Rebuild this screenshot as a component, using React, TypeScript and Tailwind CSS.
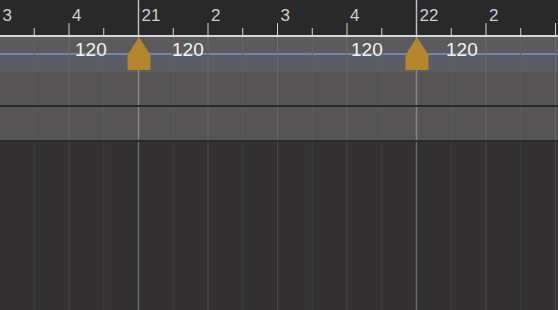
// Tempo ruler + track lanes, fixed zoom: one bar = 4 beats = 278px.
const ORIGIN = 138.5; // x of bar 21
const HALF = 34.75; // half-beat width
const STEPS = Array.from({ length: 17 }, (_, i) => i - 4); // -4 .. 12

const pos = (k: number) => ORIGIN + k * HALF;
const isBar = (k: number) => k % 8 === 0;
const isBeat = (k: number) => k % 2 === 0;

const RULER_LABELS: { k: number; text: string }[] = [
  { k: -4, text: "3" },
  { k: -2, text: "4" },
  { k: 0, text: "21" },
  { k: 2, text: "2" },
  { k: 4, text: "3" },
  { k: 6, text: "4" },
  { k: 8, text: "22" },
  { k: 10, text: "2" },
];

const TEMPO_LABELS = [75, 172, 351, 446];
const MARKERS = [0, 8];

type GridColors = { half: string; beat: string; bar: string };

function Grid({ colors }: { colors: GridColors }) {
  return (
    <svg className="pointer-events-none absolute inset-0 h-full w-full">
      {STEPS.map((k) => {
        const bar = isBar(k);
        const fill = bar ? colors.bar : isBeat(k) ? colors.beat : colors.half;
        return (
          <rect
            key={k}
            x={pos(k) - (bar ? 0.75 : 0.5)}
            y={0}
            width={bar ? 1.5 : 1}
            height="100%"
            fill={fill}
          />
        );
      })}
    </svg>
  );
}

function Ruler() {
  return (
    <div className="relative h-[37px] shrink-0 bg-[#2a292a]">
      <svg className="pointer-events-none absolute inset-0 h-full w-full">
        {STEPS.map((k) => {
          if (isBar(k))
            return <rect key={k} x={pos(k) - 0.75} y={0} width={1.5} height={37} fill="#bdbcbd" />;
          const top = isBeat(k) ? 23 : 28;
          return <rect key={k} x={pos(k) - 0.5} y={top} width={1} height={35 - top} fill="#d6d5d6" />;
        })}
        <rect x={0} y={35} width={558} height={2} fill="#d9d8d9" />
      </svg>
      {RULER_LABELS.map((l) => (
        <span
          key={l.k}
          className="absolute top-[7px] text-[17px] leading-none text-[#cfcecf]"
          style={{ left: pos(l.k) + 3 }}
        >
          {l.text}
        </span>
      ))}
    </div>
  );
}

function Marker({ left }: { left: number }) {
  return (
    <svg className="absolute top-0" style={{ left }} width={24} height={33} viewBox="0 0 24 33">
      <polygon points="12,0 23.5,18 23.5,33 0.5,33 0.5,18" fill="#b3862c" />
    </svg>
  );
}

function TempoLane() {
  return (
    <div className="relative flex h-[35px] shrink-0 flex-col">
      <div className="h-[16px] bg-[#5c5a5b]" />
      <div className="h-[2px] bg-[#6a87ad]" />
      <div className="flex-1 bg-[#5a5d63]" />
      <Grid colors={{ half: "#636263", beat: "#6d6c6e", bar: "#8b8a8c" }} />
      {TEMPO_LABELS.map((x) => (
        <span
          key={x}
          className="absolute top-[3px] text-[19px] leading-none text-[#f2f2f2]"
          style={{ left: x }}
        >
          120
        </span>
      ))}
      {MARKERS.map((k) => (
        <Marker key={k} left={pos(k) - 11.5} />
      ))}
    </div>
  );
}

function Lane() {
  return (
    <div className="relative h-[33px] shrink-0 bg-[#565455]">
      <Grid colors={{ half: "#5d5b5c", beat: "#676566", bar: "#858385" }} />
    </div>
  );
}

export default function App() {
  return (
    <div className="flex h-[310px] w-[558px] flex-col overflow-hidden bg-[#333132] font-['Liberation_Sans',Arial,sans-serif]">
      <Ruler />
      <TempoLane />
      <Lane />
      <div className="h-[2px] shrink-0 bg-[#2b2a2b]" />
      <Lane />
      <div className="h-[2px] shrink-0 bg-[#2b2a2b]" />
      <div className="relative flex-1">
        <Grid colors={{ half: "#3d3c3d", beat: "#4a494a", bar: "#6b6a6b" }} />
      </div>
    </div>
  );
}
